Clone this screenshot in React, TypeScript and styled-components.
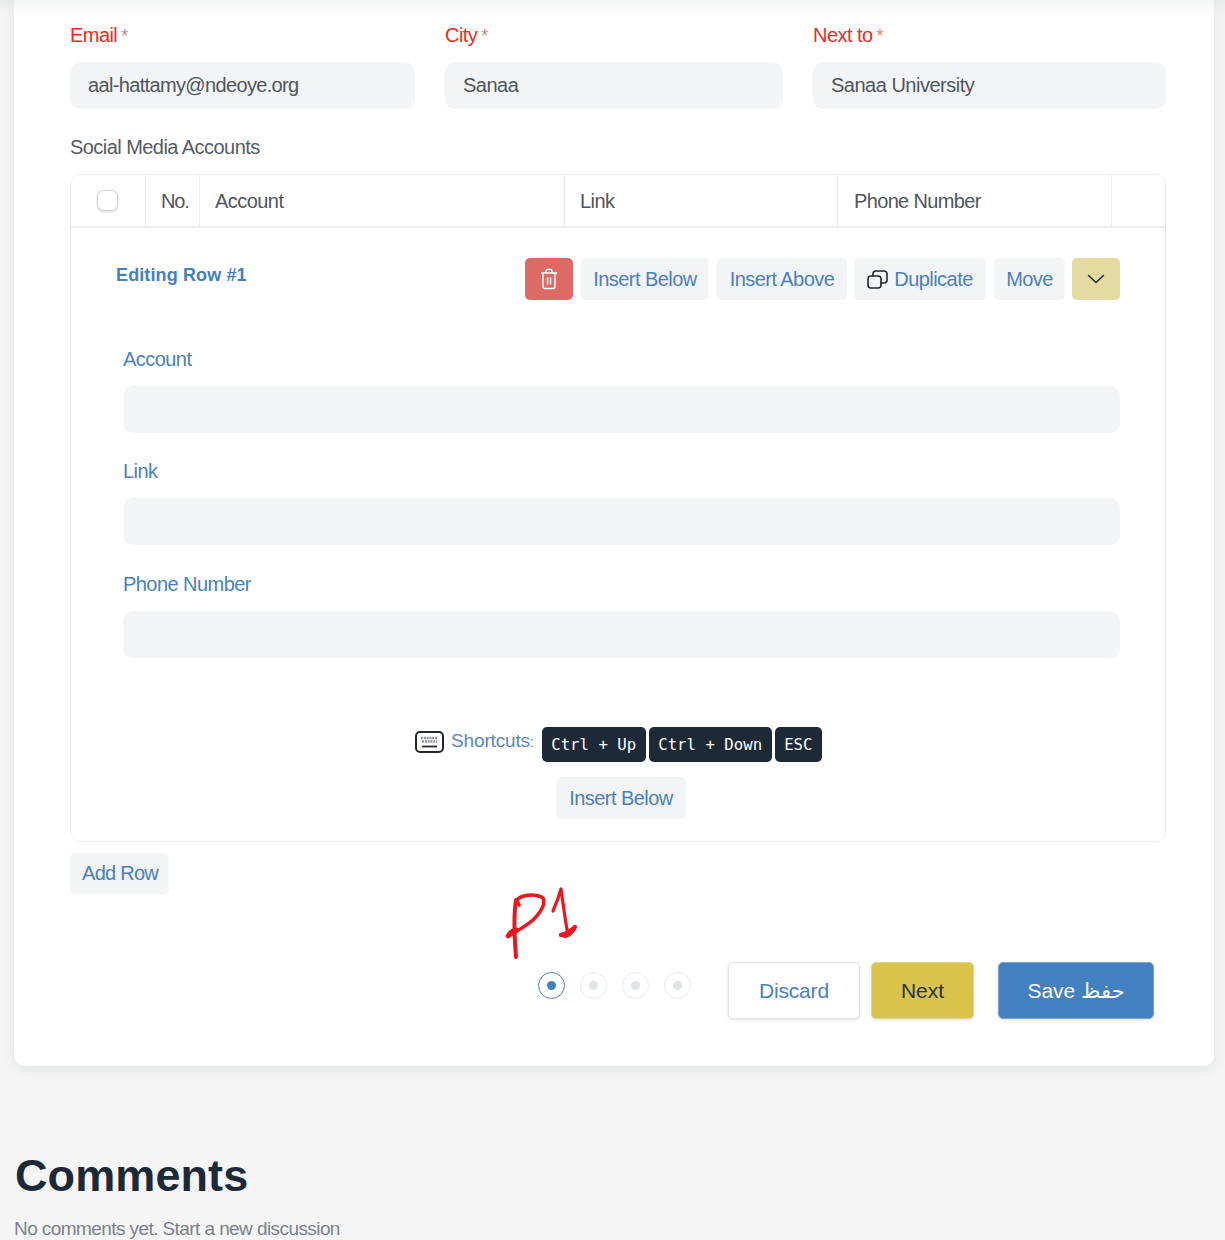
import styled, { createGlobalStyle } from 'styled-components';

const Global = createGlobalStyle`
  html, body { margin: 0; padding: 0; height: 1240px; overflow: hidden; background: #f5f5f5; }
  * { box-sizing: border-box; }
  body { font-family: "Liberation Sans", Arial, "DejaVu Sans", sans-serif; color: #1f2733; }
`;

const Page = styled.div`
  width: 1225px;
  height: 1240px;
  overflow: hidden;
  position: relative;
`;

/* sticky header's shadow falling on the page */
const TopFade = styled.div`
  position: absolute;
  top: 0; left: 0; right: 0;
  height: 14px;
  background: linear-gradient(to bottom, rgba(120,130,135,0.09), rgba(120,130,135,0));
`;

const Card = styled.section`
  width: 1200px;
  height: 1066px;
  margin-left: 14px;
  padding: 20px 48px 0 56px;
  background: #fff;
  border-radius: 0 0 10px 10px;
  box-shadow: 0 3px 14px rgba(25,39,52,0.09);
`;

const TopFields = styled.div`
  display: grid;
  grid-template-columns: 345px 338px 353px;
  column-gap: 30px;
`;

const Field = styled.div`
  display: flex;
  flex-direction: column;
`;

const ReqLabel = styled.label`
  height: 30px;
  margin-bottom: 12px;
  font-size: 20px;
  font-weight: 400;
  line-height: 30px;
  letter-spacing: -0.55px;
  color: #ee2a1f;

  span { font-size: 18px; color: #dd8178; margin-left: 4px; }
`;

const Input = styled.div<{ $tight?: boolean }>`
  height: 47px;
  padding: 0 18px;
  background: #f3f4f6;
  border-radius: 10px;
  font-size: 20px;
  line-height: 47px;
  letter-spacing: ${p => (p.$tight ? '-0.65px' : '-0.5px')};
  color: #50565e;
`;

const SectionLabel = styled.div`
  margin-top: 23px;
  height: 30px;
  font-size: 20px;
  line-height: 30px;
  letter-spacing: -0.55px;
  color: #565c63;
`;

const Table = styled.div`
  margin-top: 12px;
  height: 668px;
  border: 1px solid #ebeef0;
  border-radius: 10px;
`;

const HeadRow = styled.div`
  display: grid;
  grid-template-columns: 75px 54px 365px 273px 274px 1fr;
  height: 53px;
  border-bottom: 2px solid #ebeef0;
`;

const HeadCell = styled.div`
  display: flex;
  align-items: center;
  padding: 2px 0 0 15px;
  border-right: 1px solid #ebeef0;
  font-size: 20px;
  letter-spacing: -0.55px;
  color: #50565e;

  &:first-child { padding: 0 0 0 26px; }
  &:last-child { border-right: 0; }
`;

const NoCell = styled(HeadCell)`
  letter-spacing: -1.1px;
`;

const PhoneCell = styled(HeadCell)`
  padding-left: 16px;
  letter-spacing: -0.65px;
`;

const Check = styled.span`
  width: 21px;
  height: 21px;
  background: #fff;
  border: 1px solid #ccd3da;
  border-radius: 6px;
  box-shadow: 0 1px 2px rgba(25,39,52,0.18);
`;

const EditBody = styled.div`
  padding: 30px 45px 0 45px;
`;

const EditHead = styled.div`
  display: flex;
  justify-content: space-between;
  margin-bottom: 44px;
`;

const EditTitle = styled.div`
  font-size: 18px;
  font-weight: 700;
  line-height: 34px;
  letter-spacing: 0.12px;
  color: #4380bf;
`;

const Actions = styled.div`
  display: flex;
  gap: 8px;
`;

const Btn = styled.button<{ $w: number }>`
  width: ${p => p.$w}px;
  height: 42px;
  padding: 0;
  display: flex;
  align-items: center;
  justify-content: center;
  gap: 6px;
  border: 0;
  border-radius: 5px;
  background: #f3f4f6;
  font-family: inherit;
  font-size: 20px;
  letter-spacing: -0.55px;
  color: #4a7fc1;
`;

const DangerBtn = styled(Btn)`
  background: #dd6b63;
  color: #fff;
`;

const DuplicateBtn = styled(Btn)`
  margin-left: -1px;
`;

const ChevronBtn = styled(Btn)`
  margin-left: -1px;
  background: #e5daa0;
  color: #1f2733;
`;

const RowForm = styled.div`
  padding-left: 7px;
  display: flex;
  flex-direction: column;
`;

const RowField = styled.div`
  display: flex;
  flex-direction: column;
  margin-bottom: 23px;

  &:nth-child(2) { margin-bottom: 24px; }
`;

const RowLabel = styled.label`
  height: 30px;
  margin-bottom: 12px;
  font-size: 20px;
  line-height: 30px;
  letter-spacing: -0.55px;
  color: #4a7fc1;
`;

const BlankInput = styled.div`
  height: 47px;
  background: #f3f4f6;
  border-radius: 10px;
`;

const Shortcuts = styled.div`
  margin-top: 46px;
  display: flex;
  align-items: center;
  justify-content: center;
  gap: 3px;
  padding-left: 1px;

  svg { margin-bottom: 5px; }
`;

const ShortcutText = styled.span`
  margin: 0 5px 7px 4px;
  font-size: 19px;
  letter-spacing: -0.15px;
  color: #5b86c4;
  small { font-size: 14px; }
`;

const Kbd = styled.kbd`
  height: 35px;
  padding: 0 9.5px;
  display: flex;
  align-items: center;
  background: #1e2938;
  border-radius: 5px;
  font-family: "DejaVu Sans Mono", monospace;
  font-size: 15.7px;
  color: #fff;
`;

const CenterRow = styled.div`
  margin-top: 15px;
  padding-left: 6px;
  display: flex;
  justify-content: center;
`;

const AddRow = styled(Btn)`
  margin-top: 11px;
  height: 41px;
  padding-left: 1px;
  letter-spacing: -0.75px;
`;

const P1Mark = styled.svg`
  display: block;
  margin: -12px 0 0 434px;
  width: 80px;
  height: 80px;
`;

const Footer = styled.div`
  display: flex;
`;

const Steps = styled.div`
  display: flex;
  gap: 15px;
  margin: 10px 37px 0 468px;
`;

const Step = styled.span<{ $on?: boolean }>`
  width: 27px;
  height: 27px;
  display: flex;
  align-items: center;
  justify-content: center;
  border-radius: 50%;
  background: #fff;
  border: 1px solid ${p => (p.$on ? '#4380bf' : '#e6e8ea')};

  &::after {
    content: '';
    width: 9px;
    height: 9px;
    border-radius: 50%;
    background: ${p => (p.$on ? '#4380bf' : '#e0e3e7')};
  }
`;

const BigBtn = styled.button<{ $w: number; $kind: 'plain' | 'yellow' | 'blue' }>`
  width: ${p => p.$w}px;
  height: 57px;
  padding: 0;
  border-radius: 5px;
  font-family: inherit;
  font-size: 21px;
  letter-spacing: ${p => (p.$kind === 'plain' ? '-0.2px' : '0')};
  border: 1px solid ${p => (p.$kind === 'plain' ? '#e2e3e5' : p.$kind === 'yellow' ? '#e3d68a' : '#7ba5d3')};
  background: ${p => (p.$kind === 'plain' ? '#fff' : p.$kind === 'yellow' ? '#d9c34b' : '#4380bf')};
  color: ${p => (p.$kind === 'plain' ? '#4a7fc1' : p.$kind === 'yellow' ? '#2b3340' : '#fff')};
  box-shadow: 0 1px 3px rgba(25,39,52,0.14);
`;

const NextBtn = styled(BigBtn)`
  margin: 0 24px 0 11px;
`;

const Comments = styled.div`
  padding: 82px 0 0 15px;
`;

const CommentsTitle = styled.h2`
  margin: 0;
  font-size: 45px;
  line-height: 56px;
  font-weight: 700;
  letter-spacing: 0.1px;
  color: #1e2938;
`;

const CommentsNote = styled.p`
  margin: 10px 0 0 -1px;
  font-size: 19px;
  line-height: 30px;
  letter-spacing: -0.58px;
  color: #7a828e;
`;

function TrashIcon() {
  return (
    <svg width="18" height="22" viewBox="0 0 18 22" fill="none" stroke="#fff" strokeWidth="1.5" strokeLinecap="round" strokeLinejoin="round">
      <path d="M1.5 5h15" />
      <path d="M6 4.5V3a1.5 1.5 0 0 1 1.5-1.5h3A1.5 1.5 0 0 1 12 3v1.5" />
      <path d="M3 5v13.5A2 2 0 0 0 5 20.5h8a2 2 0 0 0 2-2V5" />
      <path d="M7.5 10v6M10.5 10v6" />
    </svg>
  );
}

function DuplicateIcon() {
  return (
    <svg width="21" height="19" viewBox="0 0 21 19" fill="none" stroke="#1f2733" strokeWidth="1.6" strokeLinecap="round" strokeLinejoin="round">
      <rect x="1" y="6" width="13" height="12" rx="3" />
      <path d="M6 6V4a3 3 0 0 1 3-3h8a3 3 0 0 1 3 3v6a3 3 0 0 1-3 3h-3" />
    </svg>
  );
}

function ChevronIcon() {
  return (
    <svg width="18" height="10" viewBox="0 0 18 10" fill="none" stroke="#1f2733" strokeWidth="1.5" strokeLinecap="round" strokeLinejoin="round">
      <path d="M1.5 1.5 9 8.5l7.5-7" />
    </svg>
  );
}

function KeyboardIcon() {
  return (
    <svg width="29" height="22" viewBox="0 0 29 22" fill="none">
      <rect x="1" y="1" width="27" height="20" rx="4" stroke="#1f2733" strokeWidth="2" />
      <path d="M6 7h17M7 10.5h15" stroke="#8b929b" strokeWidth="2.4" strokeDasharray="2 .8" />
      <path d="M7 15.5h15" stroke="#1f2733" strokeWidth="1.8" />
    </svg>
  );
}

export default function App() {
  return (
    <Page>
      <Global />
      <Card>
        <TopFields>
          <Field>
            <ReqLabel>Email<span>*</span></ReqLabel>
            <Input $tight>aal-hattamy@ndeoye.org</Input>
          </Field>
          <Field>
            <ReqLabel>City<span>*</span></ReqLabel>
            <Input>Sanaa</Input>
          </Field>
          <Field>
            <ReqLabel>Next to<span>*</span></ReqLabel>
            <Input>Sanaa University</Input>
          </Field>
        </TopFields>

        <SectionLabel>Social Media Accounts</SectionLabel>
        <Table>
          <HeadRow>
            <HeadCell><Check /></HeadCell>
            <NoCell>No.</NoCell>
            <HeadCell>Account</HeadCell>
            <HeadCell>Link</HeadCell>
            <PhoneCell>Phone Number</PhoneCell>
            <HeadCell />
          </HeadRow>
          <EditBody>
            <EditHead>
              <EditTitle>Editing Row #1</EditTitle>
              <Actions>
                <DangerBtn $w={48}><TrashIcon /></DangerBtn>
                <Btn $w={128}>Insert Below</Btn>
                <Btn $w={130}>Insert Above</Btn>
                <DuplicateBtn $w={132}><DuplicateIcon />Duplicate</DuplicateBtn>
                <Btn $w={71}>Move</Btn>
                <ChevronBtn $w={48}><ChevronIcon /></ChevronBtn>
              </Actions>
            </EditHead>
            <RowForm>
              <RowField>
                <RowLabel>Account</RowLabel>
                <BlankInput />
              </RowField>
              <RowField>
                <RowLabel>Link</RowLabel>
                <BlankInput />
              </RowField>
              <RowField>
                <RowLabel>Phone Number</RowLabel>
                <BlankInput />
              </RowField>
            </RowForm>
            <Shortcuts>
              <KeyboardIcon />
              <ShortcutText>Shortcuts<small>:</small></ShortcutText>
              <Kbd>Ctrl + Up</Kbd>
              <Kbd>Ctrl + Down</Kbd>
              <Kbd>ESC</Kbd>
            </Shortcuts>
            <CenterRow>
              <Btn $w={129}>Insert Below</Btn>
            </CenterRow>
          </EditBody>
        </Table>
        <AddRow $w={99}>Add Row</AddRow>

        <P1Mark viewBox="0 0 80 80" fill="none" stroke="#e8191c" strokeLinecap="round" strokeLinejoin="round">
          <path d="M12 18C10 30 10 50 12 75" strokeWidth="4" />
          <path d="M15 23C13 20 13 17 15 16 22 12 33 12 39 16 42 22 36 31 29 38 22 44 13 49 5 54" strokeWidth="3.6" />
          <path d="M4 54C6 50 10 48 13 48" strokeWidth="4.6" />
          <path d="M49 29C52 22 55 14 57 7 59 20 61 38 64 53" strokeWidth="3.2" />
          <path d="M57 53C62 52 67 49 71 45 68 50 64 53 61 54" strokeWidth="4.4" />
        </P1Mark>

        <Footer>
          <Steps>
            <Step $on />
            <Step />
            <Step />
            <Step />
          </Steps>
          <BigBtn $w={132} $kind="plain">Discard</BigBtn>
          <NextBtn $w={103} $kind="yellow">Next</NextBtn>
          <BigBtn $w={156} $kind="blue">Save حفظ</BigBtn>
        </Footer>
      </Card>

      <Comments>
        <CommentsTitle>Comments</CommentsTitle>
        <CommentsNote>No comments yet. Start a new discussion</CommentsNote>
      </Comments>
      <TopFade />
    </Page>
  );
}
